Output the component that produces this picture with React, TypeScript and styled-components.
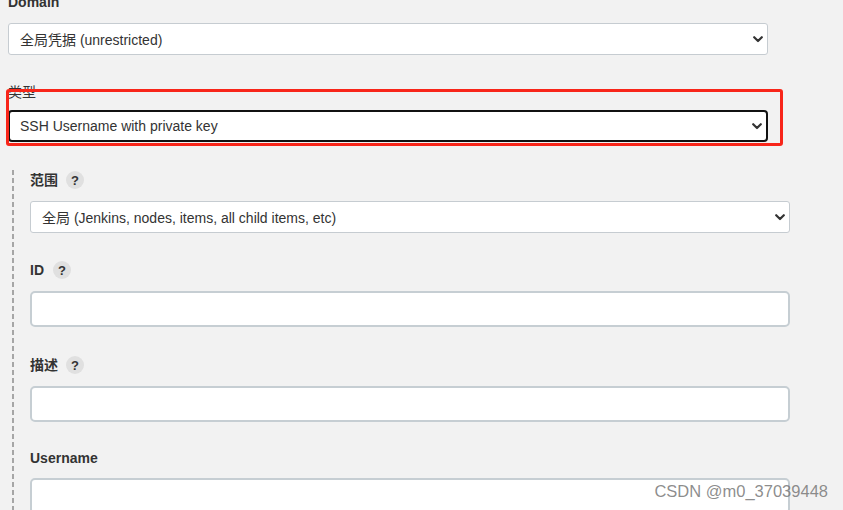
import React from "react";
import styled, { createGlobalStyle } from "styled-components";

const GlobalStyle = createGlobalStyle`
  html, body {
    margin: 0;
    padding: 0;
    background: #f2f2f2;
    overflow: hidden;
  }
  body {
    font-family: "Liberation Sans", "Noto Sans CJK SC", Arial, sans-serif;
    color: #333;
  }
`;

const Page = styled.div`
  position: relative;
  width: 843px;
  height: 510px;
  overflow: hidden;
`;

const Form = styled.div`
  display: flex;
  flex-direction: column;
  padding: 0 8px;
  margin-top: -8px;
`;

const Field = styled.div<{ $gap?: number }>`
  position: relative;
  display: flex;
  flex-direction: column;
  width: 760px;
  margin-bottom: ${(p) => (p.$gap ?? 27)}px;
`;

const LabelRow = styled.div<{ $space?: number; $light?: boolean }>`
  display: flex;
  align-items: center;
  height: 20px;
  line-height: 20px;
  font-size: 14px;
  font-weight: ${(p) => (p.$light ? 400 : 700)};
  color: #333;
  margin-bottom: ${(p) => (p.$space ?? 11)}px;
`;

const Help = styled.span<{ $gapLeft?: number }>`
  display: inline-flex;
  align-items: center;
  justify-content: center;
  width: 18px;
  height: 18px;
  border-radius: 50%;
  background: #e0e0e0;
  margin-left: ${(p) => (p.$gapLeft ?? 8)}px;
  font-size: 13px;
  font-weight: 700;
  color: #333;
  line-height: 1;
`;

const SelectBox = styled.div<{ $focused?: boolean }>`
  position: relative;
  box-sizing: border-box;
  width: 760px;
  height: 32px;
  display: flex;
  align-items: center;
  padding-left: ${(p) => (p.$focused ? 10 : 11)}px;
  background: #fff;
  border: ${(p) => (p.$focused ? "2px solid #111" : "1px solid #c6ccd1")};
  border-radius: ${(p) => (p.$focused ? 4 : 3)}px;
  font-size: 14px;
  color: #333;
  white-space: nowrap;
`;

const Chevron = styled.svg`
  position: absolute;
  right: 4px;
  top: 50%;
  margin-top: -3px;
  width: 10px;
  height: 7px;
`;

const TextInput = styled.div`
  box-sizing: border-box;
  width: 760px;
  height: 36px;
  background: #fff;
  border: 2px solid #c6ced3;
  border-radius: 5px;
`;

const Highlight = styled.div`
  position: absolute;
  left: -2px;
  top: 7px;
  width: 777px;
  height: 57px;
  box-sizing: border-box;
  border: 3px solid #f8261a;
  border-radius: 3px;
  pointer-events: none;
`;

const Section = styled.div`
  display: flex;
`;

const Rail = styled.div`
  width: 2px;
  margin-left: 4px;
  margin-right: 16px;
  align-self: stretch;
  min-height: 400px;
  background: repeating-linear-gradient(
    to bottom,
    #a6a6a6 0,
    #a6a6a6 5px,
    transparent 5px,
    transparent 8px
  );
`;

const SectionBody = styled.div`
  display: flex;
  flex-direction: column;
`;

const Watermark = styled.div`
  position: absolute;
  right: 15px;
  top: 482px;
  font-family: "Liberation Sans", Arial, sans-serif;
  font-size: 16.5px;
  color: rgba(120, 120, 120, 0.85);
  pointer-events: none;
`;

const Arrow = () => (
  <Chevron viewBox="0 0 10 7">
    <path d="M1.2 1.2 L5 5 L8.8 1.2" fill="none" stroke="#333" strokeWidth="2.2" strokeLinecap="round" strokeLinejoin="round" />
  </Chevron>
);

const Select: React.FC<{ value: string; focused?: boolean }> = ({ value, focused }) => (
  <SelectBox $focused={focused}>
    {value}
    <Arrow />
  </SelectBox>
);

export default function App() {
  return (
    <Page>
      <GlobalStyle />
      <Form>
        <Field>
          <LabelRow>Domain</LabelRow>
          <Select value="全局凭据 (unrestricted)" />
        </Field>
        <Field $gap={28}>
          <LabelRow $light $space={8}>类型</LabelRow>
          <Select value="SSH Username with private key" focused />
          <Highlight />
        </Field>
        <Section>
          <Rail />
          <SectionBody>
            <Field>
              <LabelRow>
                范围<Help>?</Help>
              </LabelRow>
              <Select value="全局 (Jenkins, nodes, items, all child items, etc)" />
            </Field>
            <Field $gap={28}>
              <LabelRow>
                ID<Help $gapLeft={9}>?</Help>
              </LabelRow>
              <TextInput />
            </Field>
            <Field $gap={26}>
              <LabelRow>
                描述<Help>?</Help>
              </LabelRow>
              <TextInput />
            </Field>
            <Field>
              <LabelRow $space={10}>Username</LabelRow>
              <TextInput />
            </Field>
          </SectionBody>
        </Section>
      </Form>
      <Watermark>CSDN @m0_37039448</Watermark>
    </Page>
  );
}
